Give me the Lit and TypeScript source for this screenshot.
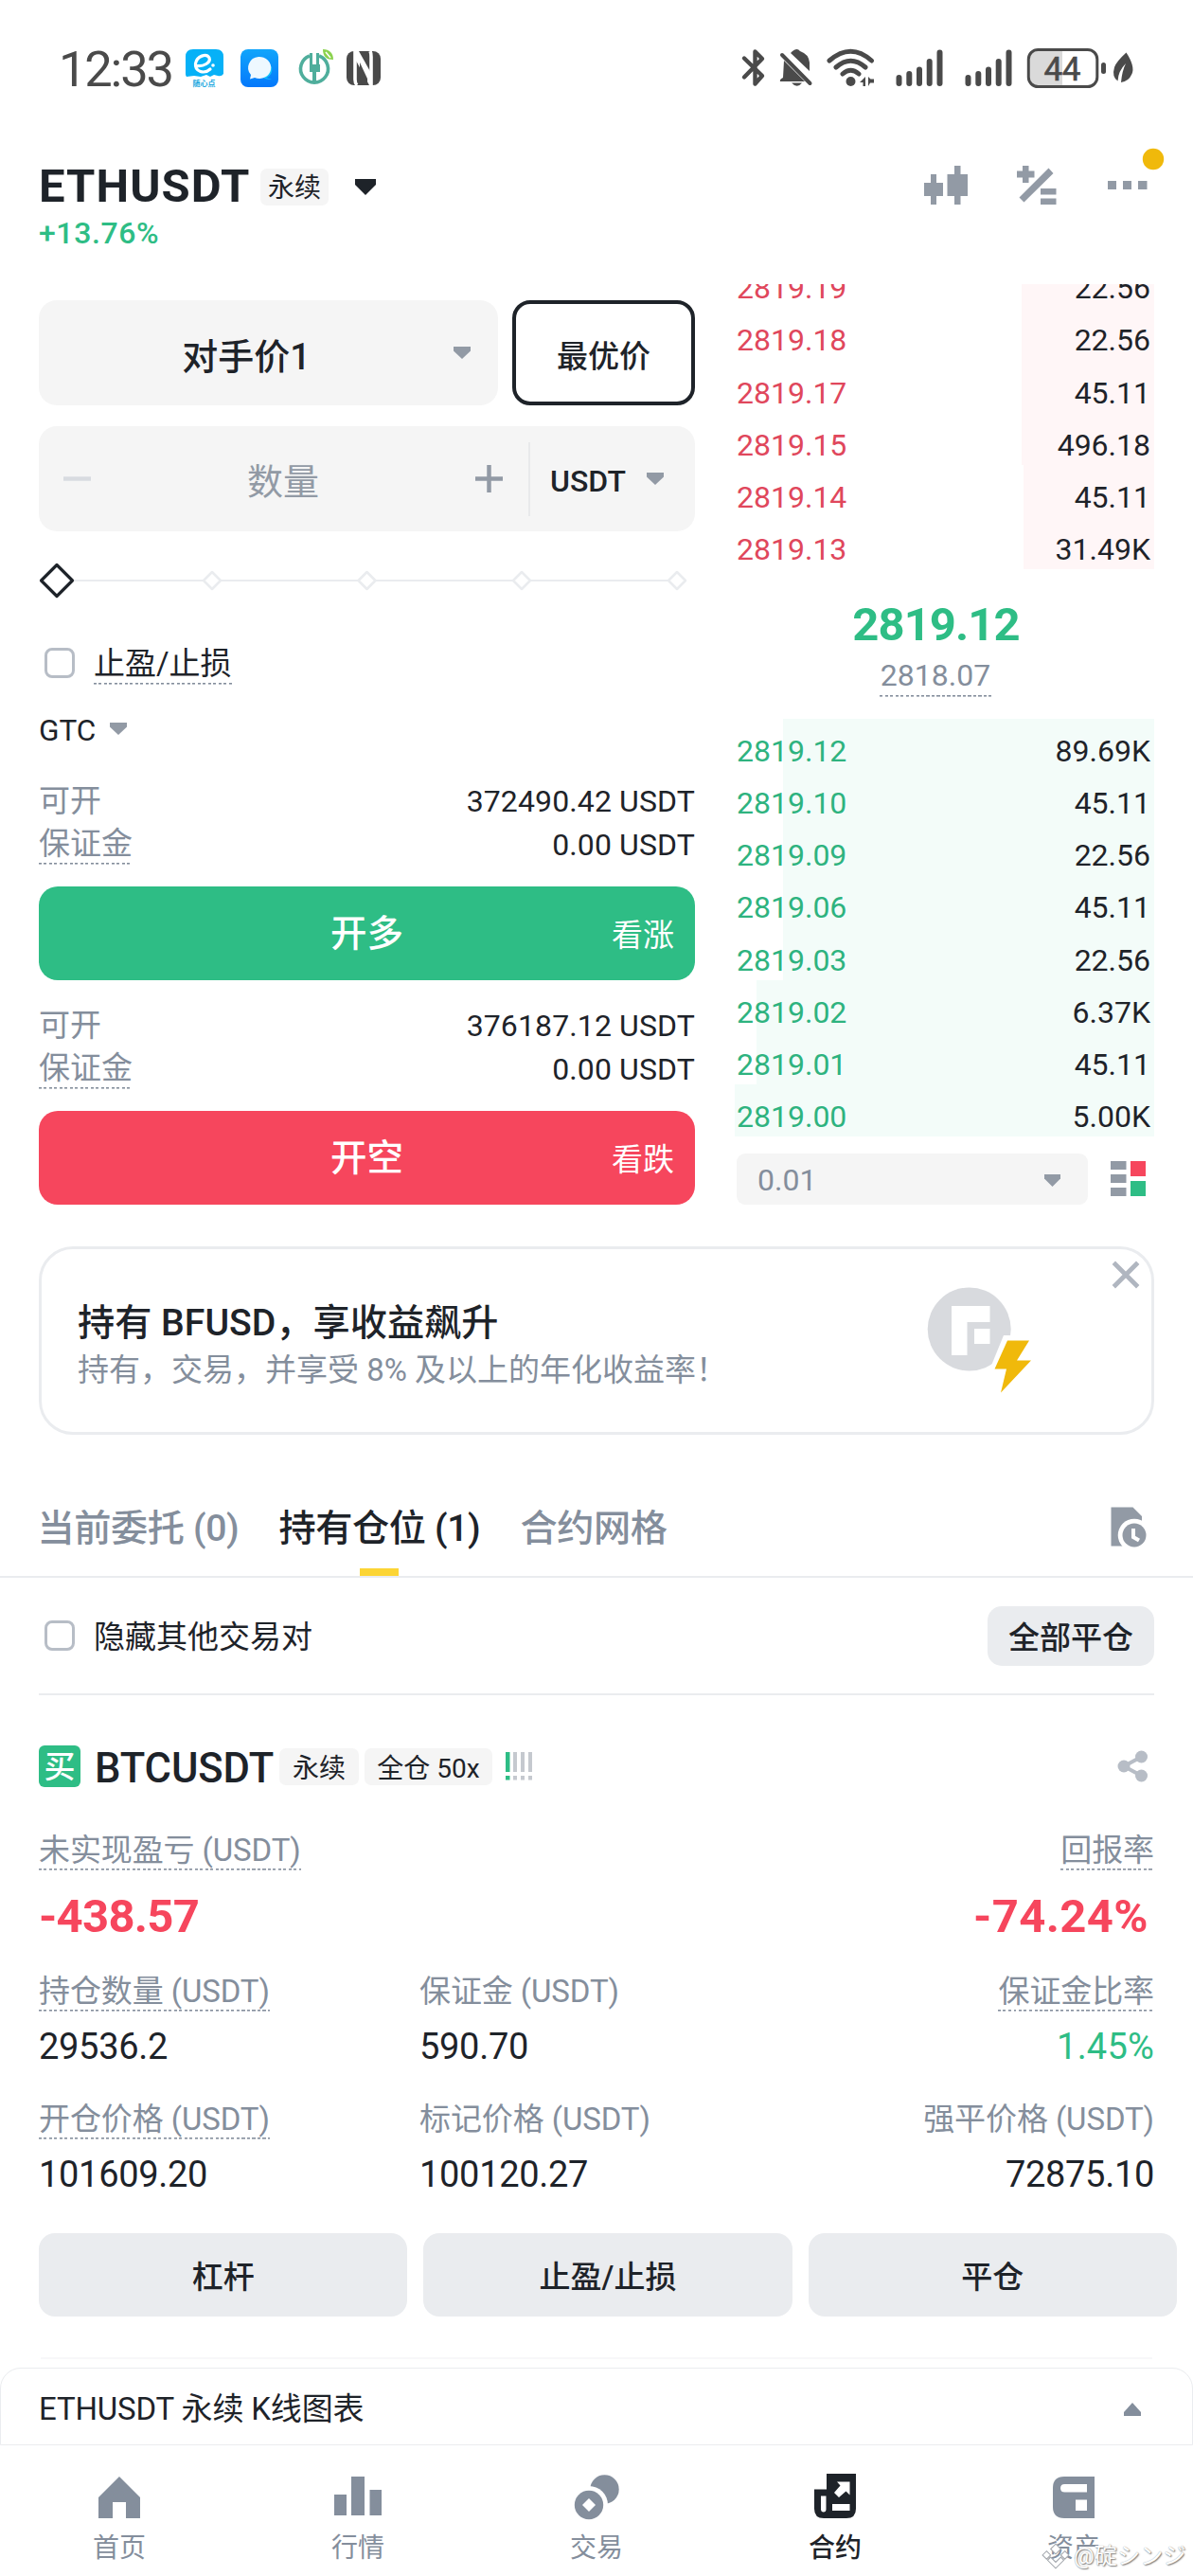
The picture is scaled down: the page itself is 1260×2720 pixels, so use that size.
import { LitElement, html, svg, css } from "lit";
import { customElement, property } from "lit/decorators.js";

const base = css`
  * { box-sizing: border-box; }
  svg { display: block; flex: none; }
  .dash {
    background: repeating-linear-gradient(90deg, #848e9c 0 3px, transparent 3px 5.5px) left bottom / 100% 1.6px no-repeat;
  }
`;

interface Level { price: string; qty: string; depth: number }

const ASKS: Level[] = [
  { price: "2819.19", qty: "22.56", depth: 140 },
  { price: "2819.18", qty: "22.56", depth: 140 },
  { price: "2819.17", qty: "45.11", depth: 140 },
  { price: "2819.15", qty: "496.18", depth: 140 },
  { price: "2819.14", qty: "45.11", depth: 138 },
  { price: "2819.13", qty: "31.49K", depth: 138 },
];

const BIDS: Level[] = [
  { price: "2819.12", qty: "89.69K", depth: 392 },
  { price: "2819.10", qty: "45.11", depth: 392 },
  { price: "2819.09", qty: "22.56", depth: 392 },
  { price: "2819.06", qty: "45.11", depth: 392 },
  { price: "2819.03", qty: "22.56", depth: 392 },
  { price: "2819.02", qty: "6.37K", depth: 420 },
  { price: "2819.01", qty: "45.11", depth: 420 },
  { price: "2819.00", qty: "5.00K", depth: 443 },
];

const caret = (w = 18, h = 13, fill = "#929aa5") => html`
  <svg width=${w} height=${h} viewBox="0 0 18 13" preserveAspectRatio="none" fill=${fill}>
    <path d="M0 0H18V4.5L9 13L0 4.5Z" />
  </svg>`;

const bars = (x: number) => svg`
  <g stroke="#4a4a4a" stroke-width="6" stroke-linecap="round">
    <path d=${`M${x + 3} 82V88M${x + 13.8} 78V88M${x + 24.5} 73.500V88M${x + 35.2} 65V88M${x + 46} 55.500V88`} />
  </g>`;

@customElement("status-bar")
class StatusBar extends LitElement {
  static styles = [base, css`
    :host { display: flex; height: 146px; padding: 44px 0 0 62px; justify-content: space-between; }
    .left { display: flex; }
    .time { width: 128px; font-size: 52.500px; line-height: 58px; letter-spacing: -2.200px; color: #4a4a4a; }
    .right { margin-right: 52px; }
    .mini { font: 700 8px "Noto Sans CJK SC", sans-serif; fill: #22a8e0; }
    .pct { font: 400 35px Roboto, sans-serif; fill: #4a4a4a; stroke: #4a4a4a; stroke-width: .6px; letter-spacing: -.5px; }
  `];
  render() {
    return html`
      <div class="left">
        <div class="time">12:33</div>
        <svg width="220" height="56" viewBox="190 44 220 56">
          <defs>
            <linearGradient id="chat" x1="0" y1="0" x2="0" y2="1">
              <stop offset="0" stop-color="#11a5fb" /><stop offset="1" stop-color="#0478fb" />
            </linearGradient>
          </defs>
          <path d="M204 52h24q8 0 8 8v18q-2 3-6 2l-4-1-4 2-4-2-6 2-7-1-8 1q-1-1-1-3V60q0-8 8-8z" fill="#06b1f7" />
          <path d="M208 69.500C215 70.500 223 66 221 61C218 56 208 59 206.500 67C205.500 76 216 78.500 222 73" fill="none" stroke="#fff" stroke-width="3.200" stroke-linecap="round" />
          <circle cx="225" cy="69" r="1.800" fill="#fff" />
          <text class="mini" x="203.500" y="90.500">随心点</text>
          <rect x="254" y="52" width="40" height="40" rx="8" fill="url(#chat)" />
          <path d="M281 82c5-2 7-6 6-11l-3-4-8 14c2 2 8 3 11 3z" fill="#12c2fa" />
          <path d="M273 60a12.300 11.500 0 1 1-4 22l-5 1.500 1-4.500A12 11.500 0 0 1 273 60z" fill="#eef8ff" />
          <path d="M327 59a14.500 14.500 0 1 0 10 0" fill="none" stroke="#4fae9c" stroke-width="3.600" />
          <path d="M327 56h3v12h-3zM334 56h3v12h-3zM327 68h11v8h-4v12h-4V76h-3z" fill="#4fae9c" />
          <path d="M341 52c7 0 11 4 11 11c-7 0-11-3-11-11z" fill="#8bd24e" />
          <path d="M344 55l5 6" stroke="#fff" stroke-width="1.500" />
          <rect x="366" y="54" width="36" height="36" rx="8" fill="#4a4a4a" />
          <path d="M377 90Q375 88 375 84V58L392 86V60Q392 56 391 54" fill="none" stroke="#fff" stroke-width="3.600" />
          <path d="M374 54H379L393 79V90H390L375 62Z" fill="#fff" />
          <path d="M380 66L388 83V90H383Q380 86 380 80Z" fill="#4a4a4a" />
        </svg>
      </div>
      <svg class="right" width="428" height="56" viewBox="780 44 428 56">
        <g fill="none" stroke="#4a4a4a" stroke-width="4.400" stroke-linecap="round" stroke-linejoin="round">
          <path d="M786 61.500L805 80L797.500 88.500V54.500L805 62L786 81.500" />
          <path d="M876 64Q898.500 44.500 920.500 64M883 71Q898.500 57.500 914 71M890 78Q898.500 70.500 907 78" stroke-width="5" />
        </g>
        <g fill="#4a4a4a">
          <path d="M828 64L850 86H824Q823 84 827 82Z" />
          <path d="M837 54Q842 50 845 54Q854 57 855 66V75L835 56Z" />
          <path d="M836 87.500H847Q842 94 836 87.500Z" />
          <path d="M826 58L855.500 88" stroke="#4a4a4a" stroke-width="4" stroke-linecap="round" />
          <circle cx="898.500" cy="86" r="5" />
          <path d="M908 87l6-6v10h-2.500v-4zM917 81v10l2-3.500h4v-4h-3.500z" />
        </g>
        ${bars(946.5)}${bars(1019.5)}
        <path d="M1096 54H1122V90H1096Q1088 90 1088 82V62Q1088 54 1096 54" fill="#dadada" />
        <rect x="1086.300" y="52.500" width="72.500" height="39" rx="10" fill="none" stroke="#4a4a4a" stroke-width="3" />
        <text class="pct" x="1102.500" y="84.500">44</text>
        <rect x="1163" y="66" width="5" height="12" rx="2.500" fill="#4a4a4a" />
        <path d="M1189.500 55.500Q1199 70 1195.500 78Q1192 86 1184 87Q1185 75 1189 67Q1181 75 1180.500 85.500Q1174 81 1177 71Q1179 65 1189.500 55.500Z" fill="#4a4a4a" />
      </svg>`;
  }
}

@customElement("pair-header")
class PairHeader extends LitElement {
  static styles = [base, css`
    :host { display: flex; justify-content: space-between; height: 154px; padding: 4px 0 0 41px; }
    .left { padding-top: 18px; }
    .name { display: flex; align-items: center; height: 58px; }
    .sym { font-size: 49px; line-height: 58px; font-weight: 700; width: 234px; letter-spacing: 1.050px; white-space: nowrap; }
    .tag { width: 72px; height: 39px; border-radius: 7px; background: #f5f5f5; font-size: 28px; line-height: 41px; text-align: center; margin-right: 28px; }
    .chg { font-size: 32px; line-height: 41px; font-weight: 500; color: #2ebd85; letter-spacing: .600px; }
  `];
  render() {
    return html`
      <div class="left">
        <div class="name"><div class="sym">ETHUSDT</div><div class="tag">永续</div>${caret(22, 17, "#1e2329")}</div>
        <div class="chg">+13.76%</div>
      </div>
      <svg width="300" height="76" viewBox="960 150 300 76" fill="#929aa5">
        <path d="M983 184h6v9h7v14h-7v9h-6v-9h-7v-14h7zM1008 175h6.500v9h7.500v23h-7.500v9h-6.500v-9h-7.500v-23h7.500z" />
        <path d="M1080 175h6.500v5.500h6v7h-6v5.500h-6.500v-5.500h-6v-7h6zM1107.500 177.500l5 5.500-31 30.500-5-5zM1099 199h16.500v6.500h-16.500zM1099 209.500h16.500v6.500h-16.500z" />
        <path d="M1170 191h9v9h-9zM1186 191h9v9h-9zM1202 191h9.500v9h-9.500z" />
        <circle cx="1218" cy="168" r="11.200" fill="#f0b90b" />
      </svg>`;
  }
}

@customElement("order-form")
class OrderForm extends LitElement {
  static styles = [base, css`
    :host { display: block; padding-top: 17px; width: 693px; }
    .row { display: flex; justify-content: space-between; }
    .box { height: 111px; border-radius: 19px; background: #f5f5f5; display: flex; align-items: center; }
    .type { width: 485px; font-size: 38px; font-weight: 500; padding-right: 29px; }
    .type span { flex: 1; text-align: center; padding-top: 2px; }
    .bbo { width: 193px; background: #fff; border: 4px solid #1e2329; justify-content: center; font-size: 33px; font-weight: 500; padding-top: 2px; }
    .amount { margin-top: 22px; padding: 0 33px 0 26px; }
    .ph { flex: 1; text-align: center; font-size: 38px; color: #929aa5; }
    .sep { width: 2px; height: 78px; background: #e8e9eb; margin: 0 21px 0 27px; }
    .unit { font-size: 32px; font-weight: 500; line-height: 40px; padding-top: 5px; width: 102px; }
    .slider { margin-top: 32px; }
    .check { display: flex; align-items: center; margin-top: 48px; height: 42px; font-size: 33px; line-height: 40px; }
    .cb { width: 32px; height: 32px; border: 3px solid #b7bdc6; border-radius: 8px; margin: 0 20px 4px 6px; }
    .check .dash { height: 42px; }
    .gtc { display: flex; align-items: center; gap: 15px; margin-top: 29px; height: 39px; font-size: 31.500px; line-height: 40px; }
    .gtc svg { margin-bottom: 5px; }
    .info { display: flex; justify-content: space-between; font-size: 32px; line-height: 40px; letter-spacing: .120px; }
    .info .lab { color: #848e9c; font-size: 33px; letter-spacing: 0; }
    .info.second { margin-top: 5px; height: 42px; line-height: 42px; }
    .info.second .lab { line-height: 40px; height: 42px; }
    .first { margin-top: 35px; }
    .first.low { margin-top: 28px; }
    .btn { margin-top: 23px; height: 99px; border-radius: 20px; color: #fff; display: grid; grid-template-columns: 1fr auto 1fr; align-items: center; padding: 0 22px; }
    .buy { background: #2ebd85; }
    .sell { background: #f6465d; }
    .big { grid-column: 2; font-size: 38.500px; font-weight: 500; line-height: 40px; }
    .small { justify-self: end; font-size: 33px; line-height: 40px; padding-top: 5px; }
  `];
  private side(cls: string, avail: string, label: string, hint: string, low: string) {
    return html`
      <div class="info first ${low}"><span class="lab">可开</span><span>${avail} USDT</span></div>
      <div class="info second"><span class="lab dash">保证金</span><span>0.00 USDT</span></div>
      <div class="btn ${cls}"><span class="big">${label}</span><span class="small">${hint}</span></div>`;
  }
  render() {
    return html`
      <div class="row">
        <div class="box type"><span>对手价1</span>${caret()}</div>
        <div class="box bbo">最优价</div>
      </div>
      <div class="box amount">
        <svg width="29" height="29" viewBox="0 0 29 29"><path d="M0 14.500H29" stroke="#d8dbe0" stroke-width="4.500" /></svg>
        <span class="ph">数量</span>
        <svg width="29" height="29" viewBox="0 0 29 29"><path d="M0 14.500H29M14.500 0V29" stroke="#929aa5" stroke-width="4.500" /></svg>
        <div class="sep"></div>
        <span class="unit">USDT</span>${caret()}
      </div>
      <svg class="slider" width="693" height="40" viewBox="41 593 693 40" fill="#fff" stroke-linejoin="round">
        <path d="M78 613H715" stroke="#eaecef" stroke-width="2" />
        ${[224, 387.5, 551, 715].map((x) => svg`<path d=${`M${x} 604L${x + 9} 613L${x} 622L${x - 9} 613Z`} stroke="#eaecef" stroke-width="2.500" />`)}
        <path d="M60 596.500L76.500 613L60 629.500L43.500 613Z" stroke="#1e2329" stroke-width="3.200" />
      </svg>
      <div class="check"><div class="cb"></div><span class="dash">止盈/止损</span></div>
      <div class="gtc">GTC ${caret()}</div>
      ${this.side("buy", "372490.42", "开多", "看涨", "")}
      ${this.side("sell", "376187.12", "开空", "看跌", "low")}`;
  }
}

@customElement("order-book")
class OrderBook extends LitElement {
  static styles = [base, css`
    :host { display: block; width: 443px; font-size: 32px; }
    .asks { height: 301px; overflow: hidden; display: flex; flex-direction: column; justify-content: flex-end; }
    .lvl { position: relative; flex: none; height: 55.140px; padding: 12px 4px 0 2px; line-height: 44px; display: flex; justify-content: space-between; }
    .bar { position: absolute; right: 0; top: 0; bottom: 0; }
    .asks .bar { background: #fff6f7; }
    .bids .bar { background: #f3fcf9; }
    .p, .q { position: relative; }
    .asks .p { color: #e0475c; }
    .bids .p { color: #2eb37f; }
    .mid { height: 158px; display: flex; flex-direction: column; align-items: center; padding: 28px 0 0 0; }
    .last { font-size: 49px; font-weight: 700; line-height: 61px; color: #2ebd85; letter-spacing: -.900px; padding-right: 18px; }
    .mark { color: #848e9c; line-height: 40px; height: 43px; margin: 3px 19px 0 0; padding: 0 1px; }
    .foot { display: flex; align-items: center; margin-top: 18px; height: 54px; padding-left: 2px; }
    .tick { width: 371px; height: 54px; border-radius: 9px; background: #f5f5f5; color: #848e9c; display: flex; align-items: center; justify-content: space-between; padding: 2px 29px 0 22px; line-height: 54px; }
    .layout { margin-left: 24px; }
  `];
  private level = (l: Level) => html`
    <div class="lvl"><div class="bar" style="width:${l.depth}px"></div><span class="p">${l.price}</span><span class="q">${l.qty}</span></div>`;
  render() {
    return html`
      <div class="asks">${ASKS.map(this.level)}</div>
      <div class="mid"><div class="last">2819.12</div><div class="mark dash">2818.07</div></div>
      <div class="bids">${BIDS.map(this.level)}</div>
      <div class="foot">
        <div class="tick"><span>0.01</span>${caret(17, 13)}</div>
        <svg class="layout" width="38" height="38" viewBox="1173 1226 38 38" fill="#929aa5">
          <path d="M1173 1226h16.500v9h-16.500zM1173 1240h16.500v9h-16.500zM1173 1254h16.500v9h-16.500z" />
          <path d="M1194 1226h16v16h-16z" fill="#f6465d" /><path d="M1194 1247h16v16h-16z" fill="#2ebd85" />
        </svg>
      </div>`;
  }
}

@customElement("promo-banner")
class PromoBanner extends LitElement {
  static styles = [base, css`
    :host { display: flex; justify-content: space-between; margin: 44px 41px 0; height: 199px; border: 3px solid #eaecef; border-radius: 36px; padding: 53px 0 0 38px; }
    .t { font-size: 39.200px; line-height: 50px; font-weight: 500; white-space: nowrap; }
    .s { font-size: 33px; line-height: 50px; color: #848e9c; white-space: nowrap; }
    svg { margin-top: -49px; }
  `];
  render() {
    return html`
      <div><div class="t">持有 BFUSD，享收益飙升</div><div class="s">持有，交易，并享受 8% 及以上的年化收益率！</div></div>
      <svg width="246" height="170" viewBox="970 1323 246 170">
        <circle cx="1023.700" cy="1403.500" r="44" fill="#d8dade" />
        <path d="M1005 1379h40.500v17h-24v35h-16.500zM1029 1403h16.500v16h-16.500z" fill="#fff" />
        <path d="M1060 1410h12v40h-25.500v-7z" fill="#fff" />
        <path d="M1064 1415.500h23l-13 21h15l-32 34 6-25h-12.500z" fill="#f0b90b" />
        <path d="M1178 1335l22 22M1200 1335l-22 22" stroke="#b0b6c0" stroke-width="4.800" stroke-linecap="square" />
      </svg>`;
  }
}

@customElement("stat-cell")
class StatCell extends LitElement {
  @property() label = "";
  @property() value = "";
  @property() tone = "";
  @property({ type: Boolean }) hinted = false;
  static styles = [base, css`
    :host { display: flex; flex-direction: column; align-items: flex-start; }
    :host([end]) { align-items: flex-end; }
    .l { font-size: 33px; line-height: 38px; height: 40px; color: #848e9c; white-space: nowrap; letter-spacing: -.100px; }
    .v { font-size: 38px; line-height: 50px; margin-top: 12px; letter-spacing: -.300px; }
    .green { color: #2ebd85; letter-spacing: .200px; }
    .loss { font-size: 49px; font-weight: 700; line-height: 60px; margin-top: 19px; color: #f6465d; letter-spacing: -.700px; }
    :host([end]) .loss { padding-right: 6px; letter-spacing: .400px; }
  `];
  render() {
    return html`<span class="l ${this.hinted ? "dash" : ""}">${this.label}</span><span class="v ${this.tone}">${this.value}</span>`;
  }
}

@customElement("positions-panel")
class PositionsPanel extends LitElement {
  static styles = [base, css`
    :host { display: block; }
    .tabs { display: flex; height: 151px; border-bottom: 2px solid #eaecef; padding: 79px 49px 0 39.500px; font-size: 39.200px; font-weight: 500; line-height: 40px; color: #848e9c; }
    .tab { display: flex; flex-direction: column; align-items: center; width: 255px; white-space: nowrap; }
    .tab span { align-self: flex-start; letter-spacing: -.400px; }
    .on { color: #1e2329; }
    .on::after { content: ""; width: 41px; height: 8px; background: #fcd535; margin: 22px 43px 0 0; }
    .hist { margin: -3px 0 0 auto; }
    .filter { display: flex; align-items: center; height: 124px; margin: 0 41px; border-bottom: 2px solid #eaecef; font-size: 33px; line-height: 40px; }
    .cb { width: 32px; height: 32px; border: 3px solid #b7bdc6; border-radius: 8px; margin: 0 20px 0 6px; }
    .filter span { padding-top: 4px; }
    .all { margin-left: auto; width: 176px; height: 63px; border-radius: 15px; background: #eaecef; text-align: center; line-height: 67px; font-weight: 500; }
    .head { display: flex; align-items: center; height: 48px; margin: 51px 48px 0 41px; }
    .side { width: 44px; height: 44px; border-radius: 6px; background: #2ebd85; color: #fff; font-size: 33px; line-height: 46px; text-align: center; font-weight: 500; }
    .sym { font-size: 43.500px; font-weight: 500; line-height: 48px; width: 194px; padding: 6px 0 0 15px; margin-right: 16px; white-space: nowrap; letter-spacing: -.100px; }
    .tag { height: 39px; width: 84px; margin-right: 6px; border-radius: 7px; background: #f5f5f5; font-size: 28px; line-height: 43px; text-align: center; white-space: nowrap; }
    .wide { width: 135px; margin-right: 14px; }
    .share { margin-left: auto; }
    .pnl { display: flex; justify-content: space-between; padding: 46px 41px 0; }
    .grid { display: grid; grid-template-columns: 402px 1fr 1fr; margin: 0 41px; padding-top: 30px; row-gap: 33px; }
    .acts { display: grid; grid-template-columns: repeat(3, 1fr); gap: 17px; margin: 37px 17px 0 41px; }
    .act { height: 88px; line-height: 93px; border-radius: 17px; background: #eaecef; font-size: 33px; font-weight: 500; text-align: center; }
    .end { height: 2px; margin: 43px 43px 0; background: #f7f7f9; }
  `];
  render() {
    return html`
      <div class="tabs">
        <div class="tab"><span>当前委托 (0)</span></div>
        <div class="tab on"><span>持有仓位 (1)</span></div>
        <div class="tab"><span>合约网格</span></div>
        <svg class="hist" width="38" height="44" viewBox="1173.500 1590.500 38 44" fill="#929aa5">
          <path d="M1174 1591h23l9.500 9.500v9h-16v22.500h-16.500z" />
          <circle cx="1198.500" cy="1620.500" r="17.300" fill="#fff" />
          <circle cx="1198.500" cy="1620.500" r="12.500" />
          <path d="M1197.500 1613.500v9l6 3.500" stroke="#fff" stroke-width="4" fill="none" />
        </svg>
      </div>
      <div class="filter"><div class="cb"></div><span>隐藏其他交易对</span><div class="all">全部平仓</div></div>
      <div class="head">
        <div class="side">买</div><div class="sym">BTCUSDT</div>
        <div class="tag">永续</div><div class="tag wide">全仓 50x</div>
        <svg width="30" height="30" viewBox="534 1850 30 30" fill="#c5c9cf">
          <path d="M534 1850h4.500v21h-4.500zM534 1875h4.500v4.500h-4.500z" fill="#2ebd85" />
          <path d="M542 1850h4v21h-4zM542 1875h4v4.500h-4zM550 1850h4v21h-4zM550 1875h4v4.500h-4zM558 1850h4v21h-4zM558 1875h4v4.500h-4z" />
        </svg>
        <svg class="share" width="32" height="34" viewBox="1180 1847 32 34" fill="#b7bdc6">
          <path d="M1205.500 1854L1187 1864L1205.500 1874" fill="none" stroke="#b7bdc6" stroke-width="4" />
          <circle cx="1187" cy="1864" r="6.500" /><circle cx="1205.500" cy="1854" r="6.500" /><circle cx="1205.500" cy="1874" r="6.500" />
        </svg>
      </div>
      <div class="pnl">
        <stat-cell label="未实现盈亏 (USDT)" value="-438.57" tone="loss" hinted></stat-cell>
        <stat-cell end label="回报率" value="-74.24%" tone="loss" hinted></stat-cell>
      </div>
      <div class="grid">
        <stat-cell label="持仓数量 (USDT)" value="29536.2" hinted></stat-cell>
        <stat-cell label="保证金 (USDT)" value="590.70"></stat-cell>
        <stat-cell end label="保证金比率" value="1.45%" tone="green" hinted></stat-cell>
        <stat-cell label="开仓价格 (USDT)" value="101609.20" hinted></stat-cell>
        <stat-cell label="标记价格 (USDT)" value="100120.27"></stat-cell>
        <stat-cell end label="强平价格 (USDT)" value="72875.10"></stat-cell>
      </div>
      <div class="acts"><div class="act">杠杆</div><div class="act">止盈/止损</div><div class="act">平仓</div></div>
      <div class="end"></div>`;
  }
}

@customElement("bottom-nav")
class BottomNav extends LitElement {
  static styles = [base, css`
    :host { display: block; position: relative; }
    .chart { display: flex; align-items: center; justify-content: space-between; height: 82px; margin-top: 9px; border: 1.500px solid #eaecef; border-radius: 22px 22px 0 0; padding: 5px 54px 0 40px; font-size: 33px; line-height: 40px; letter-spacing: -.150px; }
    .nav { display: grid; grid-template-columns: repeat(5, 1fr); padding-top: 29px; }
    .item { display: flex; flex-direction: column; align-items: center; font-size: 28px; line-height: 36px; color: #848e9c; gap: 12px; }
    .on { color: #1e2329; font-weight: 500; }
    .mark { position: absolute; left: 1100px; top: 184px; display: flex; align-items: center; gap: 4px; font-size: 24.200px; line-height: 30px; color: #fff; text-shadow: 1px 1px 1.500px #777, 0 0 1px #999; white-space: nowrap; font-family: Roboto, "Noto Sans CJK JP", sans-serif; }
  `];
  render() {
    const item = (label: string, x: number, art: unknown, on = false) => html`
      <div class="item ${on ? "on" : ""}">
        <svg width="52" height="50" viewBox="${x} 2611 52 50" fill=${on ? "#1e2329" : "#848e9c"}>${art}</svg>${label}
      </div>`;
    return html`
      <div class="chart"><span>ETHUSDT 永续 K线图表</span>
        <svg width="18" height="14" viewBox="0 0 18 14" fill="#848e9c"><path d="M9 0L18 10V14H0V10Z" /></svg>
      </div>
      <div class="nav">
        ${item("首页", 100, svg`<path d="M126 2615L148 2637V2659H133V2642H119V2659H104V2637Z" />`)}
        ${item("行情", 352, svg`<path d="M353 2634h13v22h-13zM371 2615h14v41h-14zM390.500 2629h12.500v27h-12.500z" />`)}
        ${item("交易", 604, svg`
          <circle cx="638.500" cy="2628.500" r="15.200" />
          <circle cx="622" cy="2645" r="20" fill="#fff" />
          <circle cx="622" cy="2645" r="15.200" />
          <path d="M622 2638L629 2645L622 2652L615 2645Z" fill="#fff" />`)}
        ${item("合约", 856, svg`
          <path d="M873 2612h31v37q0 10-10 10h-24q-10 0-10-10v-20.500h13z" />
          <path d="M867 2635.500h5.500v14q0 3-2.700 3t-2.800-3zM879 2644h18.500v7h-18.500zM884 2620.500h13.500v14l-4-4-7.500 6.500-5-5 6.500-7.500z" fill="#fff" />`, true)}
        ${item("资产", 1108, svg`
          <path d="M1124 2615h32v44h-32q-12 0-12-12v-20q0-12 12-12z" />
          <path d="M1124.500 2623h23.500v8.500h-23.500q-4.500 0-4.500-4.250t4.500-4.250zM1136 2639.500h12v11.500h-12z" fill="#fff" />`)}
      </div>
      <div class="mark">
        <svg width="30" height="28" viewBox="0 0 28 26" fill="#fff" stroke="#a5a9af" stroke-width="1">
          <path d="M14 1l5 5-5 5-5-5zM5 8l4 4-4 4-4-4zM23 8l4 4-4 4-4-4zM14 25L6 17l3-3 5 5 5-5 3 3z" />
        </svg>@碇シンジ
      </div>`;
  }
}

@customElement("app-root")
class AppRoot extends LitElement {
  static styles = [base, css`
    :host { display: block; width: 1260px; height: 2720px; overflow: hidden; background: #fff; color: #1e2329; font-family: Roboto, "Noto Sans CJK SC", sans-serif; }
    .trade { display: flex; justify-content: space-between; height: 972px; padding: 0 41px; }
  `];
  render() {
    return html`
      <status-bar></status-bar>
      <pair-header></pair-header>
      <div class="trade"><order-form></order-form><order-book></order-book></div>
      <promo-banner></promo-banner>
      <positions-panel></positions-panel>
      <bottom-nav></bottom-nav>`;
  }
}
